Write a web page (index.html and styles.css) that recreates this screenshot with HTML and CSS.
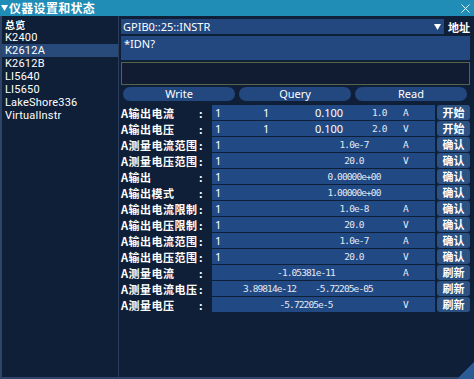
FILE: index.html
```html
<!DOCTYPE html>
<html lang="zh">
<head>
<meta charset="utf-8">
<title>仪器设置和状态</title>
<link rel="stylesheet" href="styles.css">
</head>
<body>
<div class="window">
  <div class="titlebar">
    <svg class="tri" width="7" height="6" viewBox="0 0 7 6"><polygon points="0,0 7,0 3.5,6" fill="#fff"/></svg>
    <span class="title">仪器设置和状态</span>
    <svg class="close" width="9" height="9" viewBox="0 0 9 9"><path d="M0.5 0.5 L8.5 8.5 M8.5 0.5 L0.5 8.5" stroke="#e8f4fa" stroke-width="1"/></svg>
  </div>
  <div class="body">
    <ul class="list">
      <li class="cjk">总览</li>
      <li>K2400</li>
      <li class="sel">K2612A</li>
      <li>K2612B</li>
      <li>LI5640</li>
      <li>LI5650</li>
      <li>LakeShore336</li>
      <li>VirtualInstr</li>
    </ul>
    <div class="panel">
      <div class="combo-row">
        <div class="combo"><span>GPIB0::25::INSTR</span><svg class="arrow" width="7" height="6" viewBox="0 0 7 6"><polygon points="0,0 7,0 3.5,6" fill="#fff"/></svg></div>
        <span class="combo-label">地址</span>
      </div>
      <div class="cmd">*IDN?</div>
      <div class="resp"></div>
      <div class="btns">
        <div class="btn">Write</div>
        <div class="btn">Query</div>
        <div class="btn">Read</div>
      </div>
      <div class="table">
        <div class="row"><div class="lbl"><span>A输出电流</span><span>:</span></div><div class="field pair"><span class="n">1</span><span class="n">1</span><span class="n">0.100</span><span class="m">1.0</span><span class="m">A</span></div><div class="act">开始</div></div>
        <div class="row"><div class="lbl"><span>A输出电压</span><span>:</span></div><div class="field pair"><span class="n">1</span><span class="n">1</span><span class="n">0.100</span><span class="m">2.0</span><span class="m">V</span></div><div class="act">开始</div></div>
        <div class="row"><div class="lbl"><span>A测量电流范围</span><span>:</span></div><div class="field rng"><span class="n">1</span><span class="m c">1.0e-7</span><span class="m u">A</span></div><div class="act">确认</div></div>
        <div class="row"><div class="lbl"><span>A测量电压范围</span><span>:</span></div><div class="field rng"><span class="n">1</span><span class="m c">20.0</span><span class="m u">V</span></div><div class="act">确认</div></div>
        <div class="row"><div class="lbl"><span>A输出</span><span>:</span></div><div class="field rng"><span class="n">1</span><span class="m c">0.00000e+00</span></div><div class="act">确认</div></div>
        <div class="row"><div class="lbl"><span>A输出模式</span><span>:</span></div><div class="field rng"><span class="n">1</span><span class="m c">1.00000e+00</span></div><div class="act">确认</div></div>
        <div class="row"><div class="lbl"><span>A输出电流限制</span><span>:</span></div><div class="field rng"><span class="n">1</span><span class="m c">1.0e-8</span><span class="m u">A</span></div><div class="act">确认</div></div>
        <div class="row"><div class="lbl"><span>A输出电压限制</span><span>:</span></div><div class="field rng"><span class="n">1</span><span class="m c">20.0</span><span class="m u">V</span></div><div class="act">确认</div></div>
        <div class="row"><div class="lbl"><span>A输出电流范围</span><span>:</span></div><div class="field rng"><span class="n">1</span><span class="m c">1.0e-7</span><span class="m u">A</span></div><div class="act">确认</div></div>
        <div class="row"><div class="lbl"><span>A输出电压范围</span><span>:</span></div><div class="field rng"><span class="n">1</span><span class="m c">20.0</span><span class="m u">V</span></div><div class="act">确认</div></div>
        <div class="row"><div class="lbl"><span>A测量电流</span><span>:</span></div><div class="field meas"><span class="m c">-1.05381e-11</span><span class="m u">A</span></div><div class="act">刷新</div></div>
        <div class="row"><div class="lbl"><span>A测量电流电压</span><span>:</span></div><div class="field meas2"><span class="m">3.89814e-12</span><span class="m">-5.72205e-05</span></div><div class="act">刷新</div></div>
        <div class="row"><div class="lbl"><span>A测量电压</span><span>:</span></div><div class="field meas"><span class="m c">-5.72205e-5</span><span class="m u">V</span></div><div class="act">刷新</div></div>
      </div>
    </div>
  </div>
  <svg class="grip" width="17" height="17" viewBox="0 0 17 17"><polygon points="17,0 17,17 0,17" fill="#2a5b95"/></svg>
</div>
</body>
</html>
```
FILE: styles.css
```css
* { box-sizing: border-box; margin: 0; padding: 0; }
html, body { width: 474px; height: 379px; overflow: hidden; background: #101f38; }
body {
  font-family: "Noto Sans", "Noto Sans CJK SC", sans-serif;
  font-size: 11px;
  color: #ffffff;
}
.window {
  position: relative;
  width: 474px;
  height: 379px;
  display: flex;
  flex-direction: column;
  background: #101f38;
}
.titlebar {
  height: 16px;
  flex: none;
  background: #1f8db5;
  display: flex;
  align-items: center;
  padding-left: 1px;
}
.tri { flex: none; }
.title {
  margin-left: 1px;
  font-family: "Noto Sans CJK SC", sans-serif;
  font-weight: 700;
  font-size: 12px;
  letter-spacing: 0.3px;
  line-height: 16px;
}
.close { margin-left: auto; margin-right: 4px; }
.body {
  flex: 1;
  display: flex;
  border-left: 2px solid #2e4468;
  border-bottom: 2px solid #2e4468;
  min-height: 0;
}
.list {
  width: 117px;
  flex: none;
  border-right: 1px solid #2a3d5e;
  padding-top: 2px;
  list-style: none;
  font-family: Roboto, "Noto Sans CJK SC", sans-serif;
  font-size: 11px;
}
.list li {
  height: 13px;
  line-height: 13px;
  padding-left: 3px;
  white-space: nowrap;
  letter-spacing: 0.2px;
}
.list li.cjk { font-family: "Noto Sans CJK SC", sans-serif; font-weight: 700; font-size: 10px; }
.list li.sel { background: #284a7a; }
.panel {
  flex: 1;
  padding: 3px 4px 0 2px;
  display: flex;
  flex-direction: column;
}
.combo-row { display: flex; height: 15px; align-items: center; }
.combo {
  flex: 1;
  height: 15px;
  background: #234880;
  display: flex;
  align-items: center;
  justify-content: space-between;
  padding: 0 3px 0 2px;
  line-height: 15px;
}
.combo-label {
  margin-left: 4px;
  font-family: "Noto Sans CJK SC", sans-serif;
  font-weight: 700;
  font-size: 11px;
  width: 22px;
}
.cmd {
  margin-top: 2px;
  height: 24px;
  background: #234880;
  padding: 1px 3px;
  line-height: 14px;
}
.resp {
  margin-top: 2px;
  height: 23px;
  background: #111c32;
  border: 1px solid #56644a;
}
.btns {
  margin-top: 2px;
  height: 14px;
  display: flex;
  gap: 4px;
  padding: 0 3px 0 2px;
}
.btn {
  flex: 1;
  background: #234880;
  border-radius: 7px;
  text-align: center;
  line-height: 14px;
}
.table {
  margin-top: 4px;
  display: flex;
  flex-direction: column;
  gap: 1px;
}
.row { display: flex; height: 15px; }
.lbl {
  width: 91px;
  flex: none;
  display: flex;
  justify-content: space-between;
  align-items: center;
  padding-right: 9px;
  font-family: "Noto Sans CJK SC", sans-serif;
  font-weight: 700;
  font-size: 11px;
  letter-spacing: 0.5px;
  white-space: nowrap;
}
.field {
  width: 223px;
  flex: none;
  background: #214a84;
  display: grid;
  align-items: center;
  padding-left: 3px;
  white-space: nowrap;
}
.field.pair { grid-template-columns: 48px 52px 57px 31px 1fr; }
.field.rng { grid-template-columns: 97px 84px 1fr; }
.field.meas { grid-template-columns: 182px 1fr; }
.field.meas2 { grid-template-columns: 72px 1fr; padding-left: 31px; }
.n { font-size: 11px; line-height: 15px; }
.m {
  font-family: "DejaVu Sans Mono", monospace;
  font-size: 9.5px;
  letter-spacing: -0.9px;
  line-height: 15px;
  color: #e3e9f2;
}
.c { text-align: center; }
.rng .u { padding-left: 7px; }
.meas .u { padding-left: 6px; }
.act {
  width: 33px;
  margin-left: 2px;
  flex: none;
  background: #2c5283;
  border-radius: 3px;
  text-align: center;
  font-family: "Noto Sans CJK SC", sans-serif;
  font-weight: 700;
  font-size: 11px;
  line-height: 15px;
}
.grip { position: absolute; right: 0; bottom: 0; }
```
